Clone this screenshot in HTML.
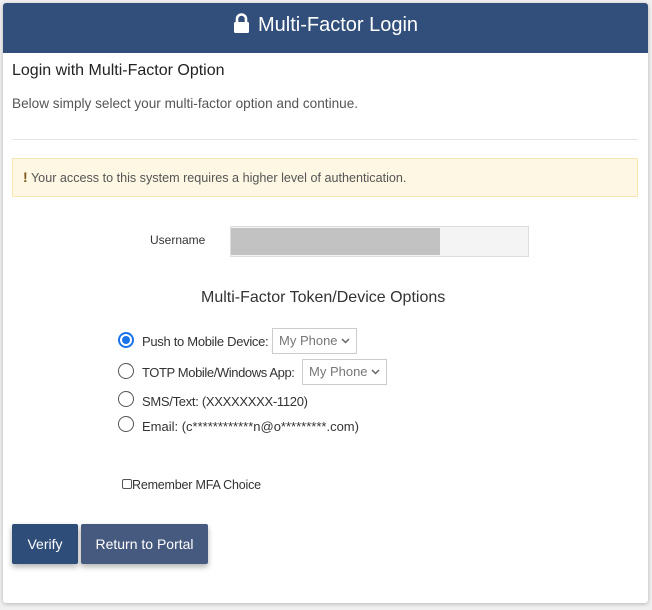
<!DOCTYPE html>
<html><head><meta charset="utf-8"><style>
*{box-sizing:border-box;margin:0;padding:0}
body{width:652px;height:610px;background:#f0f0f0;font-family:"Liberation Sans",sans-serif;position:relative;overflow:hidden}
.card{position:absolute;left:3px;top:3px;width:645px;height:600px;background:#fff;border-radius:3px;box-shadow:0 1px 4px rgba(0,0,0,.25)}
.hdr{position:absolute;left:0;top:0;width:645px;height:50px;background:#314f7a;color:#fff;font-size:20px;text-align:center;line-height:44px;border-radius:3px 3px 0 0}
.a{position:absolute;white-space:nowrap}
.sel{position:absolute;height:26px;border:1px solid #ccc;background:#fff;color:#777;font-size:13px;line-height:24px;padding-left:6px}
.sel svg{position:absolute;right:6px;top:9px}
.radio{position:absolute;width:16px;height:16px;border:1.5px solid #555;border-radius:50%}
.lbl{position:absolute;font-size:13px;color:#333;white-space:nowrap}
.btn{position:absolute;top:521px;height:40px;color:#fff;font-size:14px;line-height:40px;text-align:center;border-radius:2px;box-shadow:0 3px 6px rgba(0,0,0,.3)}
</style></head><body>
<div class="card">
<div class="hdr"><svg width="17" height="20" viewBox="0 0 17 20" style="vertical-align:-2px;margin-right:8px"><path d="M4 9V6a4.5 4.5 0 0 1 9 0v3" fill="none" stroke="#fff" stroke-width="2.6"/><rect x="1" y="9" width="15" height="11" rx="1.5" fill="#fff"/></svg>Multi-Factor Login</div>
<div class="a" style="left:9px;top:59px;font-size:16px;color:#222">Login with Multi-Factor Option</div>
<div class="a" style="left:9px;top:93px;font-size:13.6px;color:#555">Below simply select your multi-factor option and continue.</div>
<div style="position:absolute;left:9px;top:136px;width:626px;height:1px;background:#e5e5e5"></div>
<div style="position:absolute;left:9px;top:155px;width:626px;height:39px;background:#fdf7e3;border:1px solid #f8e5b0"></div>
<div class="a" style="left:20px;top:166px;font-size:12.6px;color:#555"><b style="color:#7a5a1a;font-size:14px">!</b> Your access to this system requires a higher level of authentication.</div>
<div class="a" style="left:147px;top:230px;font-size:12px;color:#333">Username</div>
<div style="position:absolute;left:227px;top:223px;width:299px;height:31px;background:#f4f4f4;border:1px solid #ddd"><div style="position:absolute;left:0;top:1px;width:209px;height:27px;background:#c2c2c2"></div></div>
<div class="a" style="left:198px;top:286px;font-size:16px;color:#333">Multi-Factor Token/Device Options</div>
<div style="position:absolute;left:115px;top:329px;width:16px;height:16px;border:2px solid #1a73e8;border-radius:50%"><div style="position:absolute;left:2px;top:2px;width:8px;height:8px;border-radius:50%;background:#1a73e8"></div></div>
<div class="lbl" style="left:139px;top:331px;letter-spacing:-0.3px">Push to Mobile Device:</div>
<div class="sel" style="left:269px;top:325px;width:85px">My Phone<svg width="9" height="6"><path d="M1 1l3.5 3.5L8 1" fill="none" stroke="#666" stroke-width="1.5"/></svg></div>
<div class="radio" style="left:115px;top:360px"></div>
<div class="lbl" style="left:139px;top:362px;letter-spacing:-0.4px">TOTP Mobile/Windows App:</div>
<div class="sel" style="left:299px;top:356px;width:85px">My Phone<svg width="9" height="6"><path d="M1 1l3.5 3.5L8 1" fill="none" stroke="#666" stroke-width="1.5"/></svg></div>
<div class="radio" style="left:115px;top:388px"></div>
<div class="lbl" style="left:139px;top:391px;letter-spacing:-0.3px">SMS/Text: (XXXXXXXX-1120)</div>
<div class="radio" style="left:115px;top:413px"></div>
<div class="lbl" style="left:139px;top:416px">Email: (c************n@o*********.com)</div>
<div style="position:absolute;left:119px;top:476px;width:10px;height:10px;border:1px solid #555;border-radius:2px"></div>
<div class="lbl" style="left:129px;top:475px;color:#333;font-size:12.5px;letter-spacing:-0.2px">Remember MFA Choice</div>
<div class="btn" style="left:9px;width:66px;background:#2f4d79">Verify</div>
<div class="btn" style="left:78px;width:127px;background:#46597e">Return to Portal</div>
</div>
</body></html>
